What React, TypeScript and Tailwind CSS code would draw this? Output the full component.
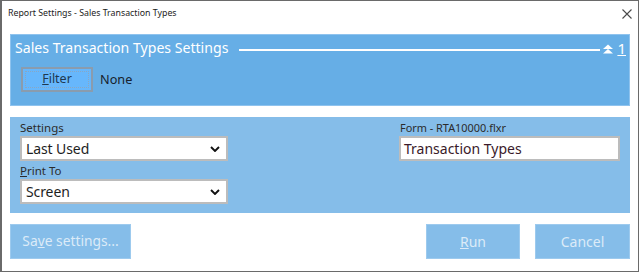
const font = { fontFamily: '"Noto Sans", "Open Sans", sans-serif' }

function Chevron() {
	return (
		<svg width="10" height="6" viewBox="0 0 10 6">
			<path d="M1 1 L5 5 L9 1" fill="none" stroke="#111" strokeWidth="1.9" />
		</svg>
	)
}

function Select({ value, width }: { value: string; width: string }) {
	return (
		<div
			className={`${width} h-[25px] bg-white border-2 border-[#bcbcbc] flex items-center justify-between pl-[4px] pr-[6px]`}>
			<span className="text-[14px] tracking-[-0.1px] text-[#1e1e1e] leading-none">{value}</span>
			<Chevron />
		</div>
	)
}

export default function App() {
	return (
		<div className="w-[640px] h-[273px] bg-white" style={font}>
			<div className="w-[639px] h-[272px] border border-l-2 border-[#6a6a6a] bg-white flex flex-col">
				{/* title bar */}
				<div className="h-[33px] flex items-start justify-between pl-[6px] pr-[6px] pt-[6px]">
					<span className="text-[8.8px] text-[#1b1b1b]">
						Report Settings - Sales Transaction Types
					</span>
					<svg width="10" height="10" viewBox="0 0 10 10" className="mt-[2px] mr-[0px]">
						<path d="M0.5 0.5 L9.5 9.5 M9.5 0.5 L0.5 9.5" stroke="#4a4a4a" strokeWidth="1.1" />
					</svg>
				</div>

				{/* settings panel */}
				<div className="ml-[8px] w-[620px] h-[72px] bg-[#66aee6] border border-[#8fc3ee] flex flex-col">
					<div className="flex items-center h-[24px] pl-[4px] pr-[2px] pt-[2px]">
						<span className="text-[14.1px] text-white whitespace-nowrap">
							Sales Transaction Types Settings
						</span>
						<div className="flex-1 h-[2px] bg-white ml-[11px] mr-[3px] mt-[3px]" />
						<svg width="10" height="10" viewBox="0 0 10 10" className="mt-[2px]">
							<path d="M0 5 L5 0.5 L10 5 Z" fill="white" />
							<path d="M0 9.5 L5 5 L10 9.5 Z" fill="white" />
						</svg>
						<span className="text-[15px] text-white underline ml-[4px] mr-[1px] leading-none">1</span>
					</div>
					<div className="flex items-center mt-[8px] pl-[10px]">
						<div className="w-[72px] h-[25px] bg-[#67b7fc] border-2 border-[#8a9cae] p-[2px]">
							<div className="w-full h-full border border-dotted border-[#8aa7c2] flex items-center justify-center">
								<span className="text-[12.5px] text-[#20384f]">
									<span className="underline">F</span>ilter
								</span>
							</div>
						</div>
						<span className="ml-[7px] text-[12.7px] text-[#17222d]">None</span>
					</div>
				</div>

				{/* form panel */}
				<div className="ml-[8px] mt-[11px] w-[620px] h-[96px] bg-[#85bde9] flex justify-between pl-[10px] pr-[10px] pt-[3px]">
					<div className="flex flex-col">
						<span className="text-[11.5px] text-[#2b2b2b] leading-[16px]">Settings</span>
						<Select value="Last Used" width="w-[208px]" />
						<span className="text-[11.5px] text-[#2b2b2b] leading-[16px] mt-[2px]">
							<span className="underline">P</span>rint To
						</span>
						<Select value="Screen" width="w-[208px]" />
					</div>
					<div className="flex flex-col">
						<span className="text-[10.9px] text-[#2b2b2b] leading-[16px] pl-[1px]">
							Form - RTA10000.flxr
						</span>
						<div className="w-[221px] h-[25px] bg-white border-2 border-[#bcbcbc] flex items-center pl-[3px]">
							<span className="text-[14px] text-[#3a1a2a] leading-none">Transaction Types</span>
						</div>
					</div>
				</div>

				{/* buttons */}
				<div className="ml-[8px] mt-[11px] w-[620px] flex">
					<div className="w-[121px] h-[35px] bg-[#85bde9] border border-[#9dcaee] flex items-center justify-center">
						<span className="text-[13.8px] text-[#dcebf8]">
							Sa<span className="underline">v</span>e settings...
						</span>
					</div>
					<div className="flex-1" />
					<div className="w-[94px] h-[35px] bg-[#85bde9] border border-[#9dcaee] flex items-center justify-center">
						<span className="text-[14px] text-[#dcebf8]">
							<span className="underline">R</span>un
						</span>
					</div>
					<div className="w-[95px] h-[35px] ml-[15px] bg-[#85bde9] border border-[#9dcaee] flex items-center justify-center">
						<span className="text-[14px] text-[#dcebf8]">Cancel</span>
					</div>
				</div>
			</div>
		</div>
	)
}
